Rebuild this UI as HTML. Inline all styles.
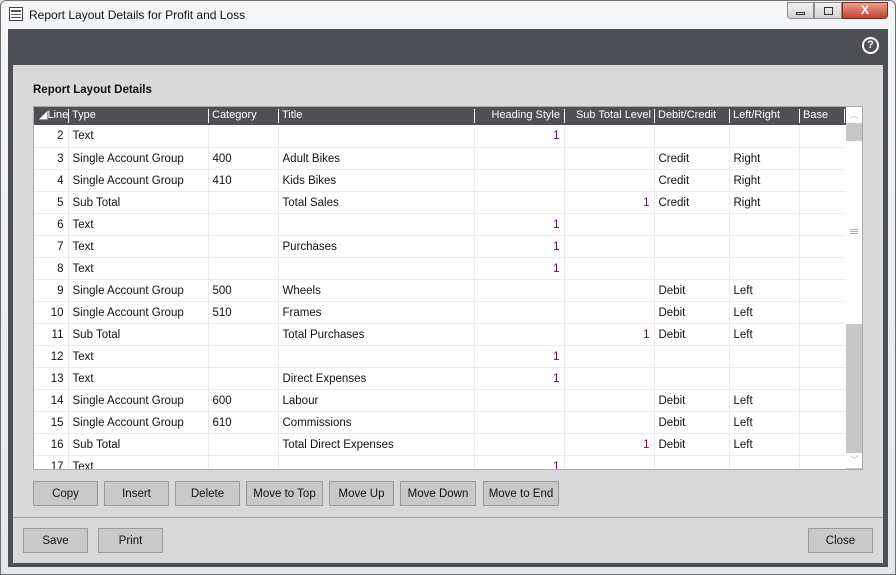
<!DOCTYPE html>
<html><head><style>
*{margin:0;padding:0;box-sizing:border-box}
body{width:896px;height:575px;position:relative;overflow:hidden;font-family:"Liberation Sans",Arial,sans-serif;font-size:11.5px;color:#111;background:#e9ecef}
.abs{position:absolute}
.btn{position:absolute;height:25px;background:#c9c9c9;border:1px solid #9a9a9a;text-align:center;line-height:24px;font-size:11.5px;color:#111}
.grid td{height:22px;border-bottom:1px solid #ebebeb;border-right:1px solid #ebebeb;padding:1px 4px 0;white-space:nowrap;overflow:hidden}
.grid{border-collapse:collapse;table-layout:fixed;background:#fff}
.n{text-align:right;color:#5a0a5a}
.ln{text-align:right;color:#111}
.hd{position:absolute;top:0;height:18px;line-height:16px;color:#fff;font-size:11px;padding-left:4px}
.hd:before{content:"";position:absolute;left:0;top:2px;height:14px;border-left:1px solid #fff}
</style></head><body>
<div class="abs" style="left:0;top:0;width:896px;height:575px;border:1px solid #6f6f6f;border-radius:6px 6px 0 0;background:linear-gradient(#f4f6f8,#e4e8ec)"></div>
<div class="abs" style="top:7px;left:9px;width:14px;height:14px;border:1px solid #444;background:#fff"></div>
<div class="abs" style="left:11px;top:10px;width:10px;height:2px;background:#555"></div>
<div class="abs" style="left:11px;top:14px;width:10px;height:1px;background:#555"></div>
<div class="abs" style="left:11px;top:17px;width:10px;height:1px;background:#555"></div>
<div class="abs" style="left:29px;top:8px;font-size:12px;color:#111">Report Layout Details for Profit and Loss</div>
<div class="abs" style="left:787px;top:2px;width:27px;height:17px;border:1px solid #8a8a8a;border-radius:0 0 0 4px;background:linear-gradient(#f2f2f2,#d4d4d4)"><div class="abs" style="left:8px;top:9px;width:9px;height:3px;border:1px solid #333"></div></div>
<div class="abs" style="left:814px;top:2px;width:28px;height:17px;border:1px solid #8a8a8a;background:linear-gradient(#f2f2f2,#d4d4d4)"><div class="abs" style="left:9px;top:4px;width:9px;height:8px;border:1px solid #333"></div></div>
<div class="abs" style="left:842px;top:2px;width:46px;height:17px;border:1px solid #7a2a20;border-radius:0 0 4px 0;background:linear-gradient(#e6a090,#c84030);color:#fff;text-align:center;font-weight:bold;font-size:12px;line-height:15px">X</div>

<div class="abs" style="left:8px;top:29px;width:880px;height:538px;background:#4f5055"></div>
<div class="abs" style="left:862px;top:37px;width:17px;height:17px;border:2px solid #fff;border-radius:50%;color:#fff;font-weight:bold;font-size:11px;text-align:center;line-height:13px">?</div>
<div class="abs" style="left:13px;top:65px;width:870px;height:498px;background:#d9d9d9"></div>
<div class="abs" style="left:13px;top:517px;width:870px;height:1px;background:#a5a5a5"></div>
<div class="abs" style="left:33px;top:84px;font-weight:bold;font-size:11.5px">Report Layout Details</div>

<div class="abs" style="left:33px;top:106px;width:830px;height:364px;border:1px solid #a9a9a9;background:#fff;overflow:hidden">
<div class="abs" style="left:0;top:0;width:812px;height:18px;background:#4f5055"></div>
<div class="abs" style="left:5px;top:0;height:18px;line-height:16px;color:#fff;font-size:11px">◢Line</div>
<div class="hd" style="left:34px">Type</div>
<div class="hd" style="left:174px">Category</div>
<div class="hd" style="left:244px">Title</div>
<div class="hd" style="left:440px;width:90px;text-align:right;padding-right:4px">Heading Style</div>
<div class="hd" style="left:530px;width:90px;text-align:right;padding-right:3px">Sub Total Level</div>
<div class="hd" style="left:620px">Debit/Credit</div>
<div class="hd" style="left:695px">Left/Right</div>
<div class="hd" style="left:765px;width:46px">Base</div>
<div class="abs" style="left:810px;top:2px;height:14px;border-left:1px solid #fff"></div>
<table class="grid abs" style="left:-1px;top:18px;width:813px">
<colgroup><col style="width:35px"><col style="width:140px"><col style="width:70px"><col style="width:196px"><col style="width:90px"><col style="width:90px"><col style="width:75px"><col style="width:70px"><col style="width:47px"></colgroup>
<tr><td class="ln">2</td><td>Text</td><td></td><td></td><td class="n">1</td><td></td><td></td><td></td><td></td></tr>
<tr><td class="ln">3</td><td>Single Account Group</td><td>400</td><td>Adult Bikes</td><td></td><td></td><td>Credit</td><td>Right</td><td></td></tr>
<tr><td class="ln">4</td><td>Single Account Group</td><td>410</td><td>Kids Bikes</td><td></td><td></td><td>Credit</td><td>Right</td><td></td></tr>
<tr><td class="ln">5</td><td>Sub Total</td><td></td><td>Total Sales</td><td></td><td class="n">1</td><td>Credit</td><td>Right</td><td></td></tr>
<tr><td class="ln">6</td><td>Text</td><td></td><td></td><td class="n">1</td><td></td><td></td><td></td><td></td></tr>
<tr><td class="ln">7</td><td>Text</td><td></td><td>Purchases</td><td class="n">1</td><td></td><td></td><td></td><td></td></tr>
<tr><td class="ln">8</td><td>Text</td><td></td><td></td><td class="n">1</td><td></td><td></td><td></td><td></td></tr>
<tr><td class="ln">9</td><td>Single Account Group</td><td>500</td><td>Wheels</td><td></td><td></td><td>Debit</td><td>Left</td><td></td></tr>
<tr><td class="ln">10</td><td>Single Account Group</td><td>510</td><td>Frames</td><td></td><td></td><td>Debit</td><td>Left</td><td></td></tr>
<tr><td class="ln">11</td><td>Sub Total</td><td></td><td>Total Purchases</td><td></td><td class="n">1</td><td>Debit</td><td>Left</td><td></td></tr>
<tr><td class="ln">12</td><td>Text</td><td></td><td></td><td class="n">1</td><td></td><td></td><td></td><td></td></tr>
<tr><td class="ln">13</td><td>Text</td><td></td><td>Direct Expenses</td><td class="n">1</td><td></td><td></td><td></td><td></td></tr>
<tr><td class="ln">14</td><td>Single Account Group</td><td>600</td><td>Labour</td><td></td><td></td><td>Debit</td><td>Left</td><td></td></tr>
<tr><td class="ln">15</td><td>Single Account Group</td><td>610</td><td>Commissions</td><td></td><td></td><td>Debit</td><td>Left</td><td></td></tr>
<tr><td class="ln">16</td><td>Sub Total</td><td></td><td>Total Direct Expenses</td><td></td><td class="n">1</td><td>Debit</td><td>Left</td><td></td></tr>
<tr><td class="ln">17</td><td>Text</td><td></td><td></td><td class="n">1</td><td></td><td></td><td></td><td></td></tr>
</table>
<div class="abs" style="left:812px;top:0;width:16px;height:362px;background:#c8c8c8"></div>
<div class="abs" style="left:812px;top:0;width:16px;height:16px;background:#fff;color:#bbb;text-align:center;font-size:9px;line-height:16px">︿</div>
<div class="abs" style="left:812px;top:34px;width:16px;height:183px;background:#fff"></div>
<div class="abs" style="left:816px;top:122px;width:8px;height:5px;border-top:1px solid #aab;border-bottom:1px solid #aab"></div>
<div class="abs" style="left:816px;top:124px;width:8px;height:1px;background:#aab"></div>
<div class="abs" style="left:812px;top:346px;width:16px;height:15px;background:#fff;color:#bbb;text-align:center;font-size:9px;line-height:15px">﹀</div>
</div>

<div class="btn" style="left:33px;top:481px;width:65px">Copy</div>
<div class="btn" style="left:104px;top:481px;width:65px">Insert</div>
<div class="btn" style="left:175px;top:481px;width:65px">Delete</div>
<div class="btn" style="left:246px;top:481px;width:77px">Move to Top</div>
<div class="btn" style="left:329px;top:481px;width:65px">Move Up</div>
<div class="btn" style="left:400px;top:481px;width:76px">Move Down</div>
<div class="btn" style="left:483px;top:481px;width:76px">Move to End</div>
<div class="btn" style="left:23px;top:528px;width:65px">Save</div>
<div class="btn" style="left:98px;top:528px;width:65px">Print</div>
<div class="btn" style="left:808px;top:528px;width:65px">Close</div>
</body></html>
